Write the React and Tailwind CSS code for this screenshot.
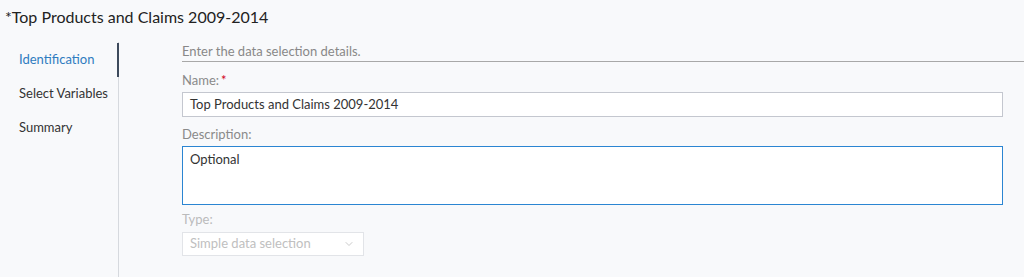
import React from 'react';
import { ChevronDown } from 'lucide-react';

const navItems = ['Identification', 'Select Variables', 'Summary'];

const App = () => {
  return (
    <div className="w-[1024px] h-[277px] bg-[#f8f9fb] text-[#333] overflow-hidden" style={{ fontFamily: 'Lato, "Noto Sans", sans-serif' }}>
      {/* Header */}
      <div className="h-[34px] pl-[5px] pt-[5px] text-[16px] leading-[24px] text-[#222]">
        *Top Products and Claims 2009-2014
      </div>

      <div className="flex mt-[8px] h-[235px]">
        {/* Left nav */}
        <div className="w-[119px] shrink-0 border-r border-[#d6d9de] pt-px">
          {navItems.map((item, i) => (
            <div
              key={item}
              className={`h-[34px] flex items-center pl-[19px] text-[13px] ${i === 0 ? 'text-[#2f7cc0] border-r-2 border-[#3d4a5c] -mr-px' : 'text-[#333]'}`}
            >
              {item}
            </div>
          ))}
        </div>

        {/* Content */}
        <div className="flex-1 pl-[63px]">
          <div className="border-b border-[#a8a8a8] h-[20px] text-[13px] leading-[18px] text-[#888]">
            Enter the data selection details.
          </div>

          <div className="pr-[21px]">
            <div className="mt-[9px] text-[13px] leading-[18px] text-[#8a8a8a]">
              Name:<span className="text-[#d0021b] ml-[2px]">*</span>
            </div>
            <div className="mt-[3px] h-[25px] bg-white border border-[#c4c7cf] flex items-center px-[7px] text-[13px] text-[#333]">
              Top Products and Claims 2009-2014
            </div>

            <div className="mt-[8px] text-[13px] leading-[18px] text-[#8a8a8a]">Description:</div>
            <div className="mt-[3px] h-[59px] bg-white border border-[#2b85d2] px-[7px] pt-[3px] text-[13px] text-[#333]">
              Optional
            </div>

            <div className="mt-[5px] text-[13px] leading-[18px] text-[#bbbbbb]">Type:</div>
            <div className="mt-[4px] w-[182px] h-[24px] bg-white border border-[#e2e4e8] flex items-center justify-between px-[7px] text-[13px] text-[#c0c0c0]">
              <span>Simple data selection</span>
              <ChevronDown size={12} strokeWidth={1.5} className="text-[#b8b8b8] mr-[1px]" />
            </div>
          </div>
        </div>
      </div>
    </div>
  );
};

export default App;
